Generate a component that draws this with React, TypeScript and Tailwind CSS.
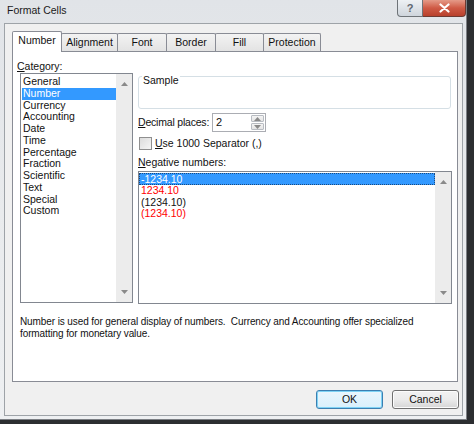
import React from "react";

const Up = () => (
  <svg width="7" height="4" viewBox="0 0 7 4"><path d="M0 4 L3.5 0 L7 4 Z" fill="#8a8a8a" /></svg>
);
const Down = () => (
  <svg width="7" height="4" viewBox="0 0 7 4"><path d="M0 0 L3.5 4 L7 0 Z" fill="#8a8a8a" /></svg>
);

function Scrollbar() {
  return (
    <div className="w-[16px] h-full bg-[#ececec] flex flex-col items-center justify-between py-[8px]">
      <Up />
      <Down />
    </div>
  );
}

const categories = [
  "General",
  "Number",
  "Currency",
  "Accounting",
  "Date",
  "Time",
  "Percentage",
  "Fraction",
  "Scientific",
  "Text",
  "Special",
  "Custom",
];

export default function App() {
  return (
    <div className="w-[474px] h-[424px] bg-[#2c2e31] font-['Liberation_Sans',Arial,sans-serif] text-[10.5px] text-[#111] overflow-hidden">
      <div className="w-[467px] h-[420px] bg-gradient-to-b from-[#e1e4e8] via-[#e9ebed] to-[#eef0f2] border-r border-b border-[#7c7f84] flex flex-col">
        {/* title bar */}
        <div className="h-[23px] flex items-start shrink-0">
          <div className="pl-[7px] pt-[4px] text-[10.5px] leading-[12px] text-[#1a1a1a]">Format Cells</div>
          <div className="ml-auto flex">
            <div className="w-[26px] h-[17px] border border-t-0 border-[#6e7378] rounded-bl-[4px] bg-gradient-to-b from-[#eef1f4] to-[#cfd5dc] flex items-center justify-center text-[11px] font-bold text-[#5d6670] leading-none">
              ?
            </div>
            <div className="w-[43px] h-[17px] border border-t-0 border-l-0 border-[#6e3a32] rounded-br-[4px] bg-gradient-to-b from-[#e49a88] via-[#cf5a45] to-[#b8402c] flex items-center justify-center">
              <svg width="11" height="10" viewBox="0 0 11 10">
                <path d="M1.5 1.5 L9.5 8.5 M9.5 1.5 L1.5 8.5" stroke="#fff" strokeWidth="2.2" strokeLinecap="round" />
              </svg>
            </div>
          </div>
        </div>
        {/* client */}
        <div className="ml-[4px] mr-[3px] mb-[3px] flex-1 border border-[#9ea3a8] bg-[#f0f0f0] flex flex-col">
          {/* tabs */}
          <div className="pl-[7px] pt-[6px] flex items-end relative z-10 h-[27px]">
            <div className="w-[50px] h-[21px] mb-[-1px] bg-white border border-b-0 border-[#898c95] rounded-t-[2px] flex items-center justify-center pb-[2px]">
              Number
            </div>
            {[
              ["Alignment", "w-[57px]"],
              ["Font", "w-[50px]"],
              ["Border", "w-[50px]"],
              ["Fill", "w-[49px]"],
              ["Protection", "w-[58px]"],
            ].map(([t, w]) => (
              <div
                key={t}
                className={`${w} h-[18px] ml-[-1px] first:ml-0 bg-gradient-to-b from-[#f3f3f3] to-[#e3e3e3] border border-b-0 border-[#898c95] rounded-t-[2px] flex items-center justify-center`}
              >
                {t}
              </div>
            ))}
          </div>
          {/* panel */}
          <div className="ml-[7px] mr-[4px] h-[331px] bg-white border border-[#898c95] flex flex-col">
            <div className="flex">
              {/* left */}
              <div className="pl-[4px] pt-[8px] flex flex-col">
                <div className="leading-[12px] h-[12px]">
                  <span className="underline">C</span>ategory:
                </div>
                <div className="ml-[3px] mt-[1px] w-[113px] h-[230px] border border-[#828790] flex bg-white">
                  <div className="flex-1 pt-[2px] pl-[1px]">
                    {categories.map((c) => (
                      <div
                        key={c}
                        className={`h-[11.75px] leading-[11.75px] pl-[1px] ${c === "Number" ? "bg-[#3399ff] text-white" : ""}`}
                      >
                        {c}
                      </div>
                    ))}
                  </div>
                  <Scrollbar />
                </div>
              </div>
              {/* right */}
              <div className="ml-[5px] flex flex-col">
                <div className="relative mt-[24px] w-[313px] h-[33px] border border-[#d5dfe5] rounded-[3px]">
                  <div className="absolute left-[3px] top-[-2px] bg-white px-[1px] leading-[10px]">Sample</div>
                </div>
                <div className="mt-[4px] flex items-center h-[19px]">
                  <div className="w-[74px] whitespace-nowrap tracking-[-0.2px]">
                    <span className="underline">D</span>ecimal places:
                  </div>
                  <div className="w-[54px] h-[19px] border border-[#abadb3] bg-white flex">
                    <div className="flex-1 pl-[3px] leading-[17px] text-[11px]">2</div>
                    <div className="w-[15px] flex flex-col p-[1px] gap-[1px]">
                      <div className="flex-1 border border-[#b8bcc2] rounded-[1px] bg-gradient-to-b from-[#f4f4f4] to-[#e4e4e4] flex items-center justify-center">
                        <Up />
                      </div>
                      <div className="flex-1 border border-[#b8bcc2] rounded-[1px] bg-gradient-to-b from-[#f4f4f4] to-[#e4e4e4] flex items-center justify-center">
                        <Down />
                      </div>
                    </div>
                  </div>
                </div>
                <div className="mt-[5px] flex items-center h-[13px]">
                  <div className="ml-[1px] w-[13px] h-[13px] border border-[#8f8f8f] bg-gradient-to-br from-[#dcdcdc] to-[#f6f6f6]" />
                  <div className="ml-[3px] whitespace-nowrap">
                    <span className="underline">U</span>se 1000 Separator (,)
                  </div>
                </div>
                <div className="mt-[6px] h-[12px] leading-[12px]">
                  <span className="underline">N</span>egative numbers:
                </div>
                <div className="mt-[3px] w-[314px] h-[133px] border border-[#828790] flex bg-white">
                  <div className="flex-1 pt-[1px] pl-[0px]">
                    <div className="h-[12px] leading-[12px] pl-[2px] bg-[#3399ff] text-white outline-1 outline-dotted outline-offset-[-1px] outline-[#1a4a80]">
                      -1234.10
                    </div>
                    <div className="h-[11.7px] leading-[11.7px] pl-[2px] text-[#ff0000]">1234.10</div>
                    <div className="h-[11.7px] leading-[11.7px] pl-[2px]">(1234.10)</div>
                    <div className="h-[11.7px] leading-[11.7px] pl-[2px] text-[#ff0000]">(1234.10)</div>
                  </div>
                  <Scrollbar />
                </div>
              </div>
            </div>
            <div className="pl-[7px] mt-[12px] leading-[12px] text-[10px] tracking-[-0.1px] whitespace-nowrap">
              Number is used for general display of numbers.&nbsp; Currency and Accounting offer specialized
              <br />
              formatting for monetary value.
            </div>
          </div>
          {/* buttons */}
          <div className="mt-[8px] flex justify-end gap-[9px] mr-[3px]">
            <button className="w-[67px] h-[19px] rounded-[3px] border border-[#3c7fb1] shadow-[inset_0_0_0_1px_#7fd3f5] bg-gradient-to-b from-[#eaf6fd] to-[#d9f0fc] text-[10.5px] leading-none">
              OK
            </button>
            <button className="w-[67px] h-[19px] rounded-[3px] border border-[#707070] shadow-[inset_0_0_0_1px_#fcfcfc] bg-gradient-to-b from-[#f2f2f2] via-[#ebebeb] to-[#d6d6d6] text-[10.5px] leading-none">
              Cancel
            </button>
          </div>
        </div>
      </div>
    </div>
  );
}
